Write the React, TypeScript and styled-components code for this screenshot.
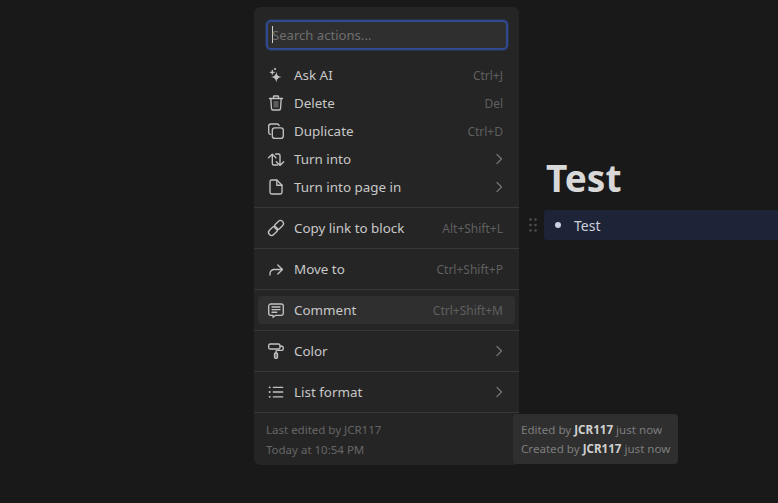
import React from "react";
import styled, { createGlobalStyle } from "styled-components";

const Global = createGlobalStyle`
  html, body { margin: 0; padding: 0; height: 100%; background: #191919; overflow: hidden; }
  #root { height: 100%; }
`;
const FONT = `"Noto Sans", "Open Sans", "Liberation Sans", sans-serif`;

const Page = styled.div`
  position: relative; width: 778px; height: 503px; background: #191919; overflow: hidden;
  font-family: ${FONT}; padding: 155px 0 0 546px; box-sizing: border-box;
`;
const Title = styled.h1`
  margin: 0; font-size: 37px; line-height: 46px; font-weight: 700; color: #d8d8d8; font-family: ${FONT};
`;
const BlockRow = styled.div`
  display: flex; align-items: center; height: 30px; margin: 9px 0 0 -2px; width: 234px; position: relative;
  background: #1e2437; border-radius: 3px 0 0 3px; padding-left: 11px; box-sizing: border-box;
`;
const Handle = styled.svg`
  position: absolute; left: -15px; top: 8px; width: 8px; height: 14px;
`;
const Bullet = styled.span`
  width: 6px; height: 6px; border-radius: 50%; background: #ccd0e0; margin-right: 13px;
`;
const BlockText = styled.span`font-size: 14px; color: #ccd0dc;`;

const Menu = styled.div`
  position: absolute; left: 254px; top: 7px; width: 265px; height: 458px; background: #252525;
  border-radius: 6px; display: flex; flex-direction: column; box-sizing: border-box;
`;
const SearchWrap = styled.div`padding: 13px 11px 11px 12px;`;
const Search = styled.div`
  height: 30px; box-sizing: border-box; border: 2px solid #2f4a8f; border-radius: 5px; background: #2f2f2f;
  box-shadow: 0 0 0 1px #28324a;
  display: flex; align-items: center; padding: 0 0 1px 4px; font-size: 13.1px; color: #6e6e6e;
`;
const Caret = styled.span`width: 1px; height: 17px; background: #cfcfcf; margin-right: -1px;`;
const Group = styled.div`display: flex; flex-direction: column; padding: 0 4px;`;
const Divider = styled.div`height: 1px; background: #373737; margin: 6px 0;`;
const Row = styled.div<{ $active?: boolean }>`
  height: 28px; display: flex; align-items: center; padding: 0 12px 0 8px; border-radius: 4px;
  background: ${p => (p.$active ? "#2f2f2f" : "transparent")};
`;
const IconBox = styled.svg`
  width: 20px; height: 20px; margin-left: -1px; margin-right: 9px; flex: none; color: #c2c2c2;
  fill: none; stroke: currentColor; stroke-width: 1.35; stroke-linecap: round; stroke-linejoin: round;
`;
const Label = styled.span`flex: 1; font-size: 13.4px; color: #c8c8c8; white-space: nowrap;`;
const Shortcut = styled.span`font-size: 12px; color: #5f5f5f; white-space: nowrap;`;
const Chevron = styled.svg`
  width: 8px; height: 12px; fill: none; stroke: #747474; stroke-width: 1.2; stroke-linecap: round; stroke-linejoin: round;
`;
const Footer = styled.div`
  padding: 1px 12px 0; font-size: 11.5px; line-height: 20px; color: #666;
`;
const Tooltip = styled.div`
  position: absolute; left: 513px; top: 414px; width: 165px; height: 50px; box-sizing: border-box;
  background: #2f2f2f; border-radius: 4px; padding: 6px 8px; font-size: 11.6px; line-height: 19px; color: #7d7d7d; white-space: nowrap;
`;
const Strong = styled.b`color: #cfcfcf; font-weight: 700;`;

const icons: Record<string, React.ReactNode> = {
  ai: <>
    <path d="M11.300 6.500c.5 3.500 1.800 5 5.500 5.500-3.700.5-5 2-5.500 5.500-.5-3.500-1.800-5-5.500-5.500 3.700-.5 5-2 5.500-5.500z" fill="currentColor" stroke="none" />
    <path d="M7.300 5.500v3.600M5.500 7.300h3.600" />
    <path d="M10 3.300v1.400M9.300 4h1.400" strokeWidth="1" />
  </>,
  del: <>
    <path d="M4.500 5.500h13M8.500 5.500V3.800c0-.5.3-.8.8-.8h3.400c.5 0 .8.3.8.8v1.700" />
    <path d="M5.800 5.500l.7 10.200c.1.800.7 1.300 1.400 1.300h6.200c.7 0 1.300-.5 1.400-1.300l.7-10.200" />
    <path d="M8.500 8v6.500h5V8z" fill="#8a8a8a" fillOpacity=".55" stroke="none" />
  </>,
  dup: <>
    <rect x="7.300" y="6.800" width="11" height="10.500" rx="2.400" />
    <path d="M5.500 13.300A2 2 0 0 1 3.700 11.300V5.200a2.200 2.200 0 0 1 2.200-2.200h6.200c1 0 1.800.6 2 1.500" />
  </>,
  turn: <>
    <path d="M3.500 8.800l3.800-3.600 3.700 3.600M7.300 5.500v9a1.500 1.500 0 0 0 1.500 1.500h3.700" />
    <path d="M10.500 5h3A1.500 1.500 0 0 1 15 6.500V16M11.300 12.700l3.700 3.700 3.700-3.700" />
  </>,
  page: <>
    <path d="M5 4.700A1.700 1.700 0 0 1 6.700 3h5.100L17 8.200v7.100a1.700 1.700 0 0 1-1.700 1.700H6.700A1.700 1.700 0 0 1 5 15.300z" />
    <path d="M11.800 3v5.200H17" />
  </>,
  link: <>
    <rect x="9" y="4" width="10" height="6" rx="3" transform="rotate(-45 14 7)" />
    <rect x="3" y="10" width="10" height="6" rx="3" transform="rotate(-45 8 13)" />
  </>,
  move: <path d="M5 16v-1.500A4 4 0 0 1 9 10.500h8.500M12.800 6l4.700 4.500-4.700 4.500" />,
  comment: <>
    <path d="M5.800 4h10.400a2.100 2.100 0 0 1 2.100 2.100v7.100a2.100 2.100 0 0 1-2.100 2.100h-5.500l-2.700 2v-2H5.800a2.100 2.100 0 0 1-2.100-2.100V6.100A2.100 2.100 0 0 1 5.800 4z" />
    <path d="M7 7h8M7 9.600h8M7 12.200h4.700" />
  </>,
  color: <>
    <rect x="3.700" y="3" width="11.300" height="5" rx="1.600" />
    <path d="M15 5.200h2a1.200 1.200 0 0 1 1.200 1.200v1.700a1.200 1.200 0 0 1-1.200 1.200h-5a1 1 0 0 0-1 1V12" />
    <rect x="9.500" y="12" width="3" height="5.300" rx="1" fill="currentColor" fillOpacity=".5" />
  </>,
  list: <>
    <path d="M8.300 5.300h9.400M8.300 10h9.400M8.300 14.800h9.400" />
    <path d="M4.600 5.300h.2M4.600 10h.2M4.600 14.800h.2" strokeWidth="1.800" />
  </>,
};

function Item({ icon, label, shortcut, sub, active }: { icon: string; label: string; shortcut?: string; sub?: boolean; active?: boolean }) {
  return (
    <Row $active={active}>
      <IconBox viewBox="0 0 20 20">{icons[icon]}</IconBox>
      <Label>{label}</Label>
      {shortcut && <Shortcut>{shortcut}</Shortcut>}
      {sub && <Chevron viewBox="0 0 8 12"><path d="M2 1.500L6.500 6 2 10.500" /></Chevron>}
    </Row>
  );
}

export default function App() {
  return (
    <>
      <Global />
      <Page>
        <Title>Test</Title>
        <BlockRow>
          <Handle viewBox="0 0 8 14" fill="#4e4e4e">
            {[1.500, 7, 12.500].flatMap(y => [1.500, 6.500].map(x => <circle key={`${x}-${y}`} cx={x} cy={y} r="1.300" />))}
          </Handle>
          <Bullet />
          <BlockText>Test</BlockText>
        </BlockRow>
        <Menu>
          <SearchWrap>
            <Search><Caret />Search actions...</Search>
          </SearchWrap>
          <Group>
            <Item icon="ai" label="Ask AI" shortcut="Ctrl+J" />
            <Item icon="del" label="Delete" shortcut="Del" />
            <Item icon="dup" label="Duplicate" shortcut="Ctrl+D" />
            <Item icon="turn" label="Turn into" sub />
            <Item icon="page" label="Turn into page in" sub />
          </Group>
          <Divider />
          <Group><Item icon="link" label="Copy link to block" shortcut="Alt+Shift+L" /></Group>
          <Divider />
          <Group><Item icon="move" label="Move to" shortcut="Ctrl+Shift+P" /></Group>
          <Divider />
          <Group><Item icon="comment" label="Comment" shortcut="Ctrl+Shift+M" active /></Group>
          <Divider />
          <Group><Item icon="color" label="Color" sub /></Group>
          <Divider />
          <Group><Item icon="list" label="List format" sub /></Group>
          <Divider />
          <Footer>Last edited by JCR117<br />Today at 10:54 PM</Footer>
        </Menu>
        <Tooltip>
          Edited by <Strong>JCR117</Strong> just now<br />
          Created by <Strong>JCR117</Strong> just now
        </Tooltip>
      </Page>
    </>
  );
}
